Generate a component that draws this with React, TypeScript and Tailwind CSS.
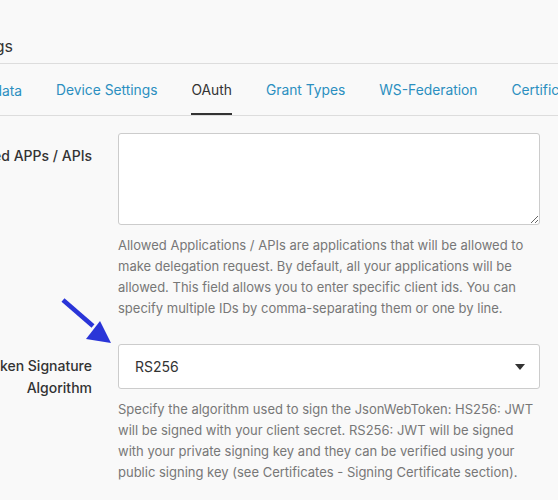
import React from "react";

const tabs = ["Device Settings", "OAuth", "Grant Types", "WS-Federation", "Certificates"];

function HelpText({ children, className = "" }: { children: React.ReactNode; className?: string }) {
  return (
    <p className={`text-[13px] leading-[21px] text-[#777] ${className}`}>{children}</p>
  );
}

function Arrow() {
  return (
    <svg
      className="absolute left-[55px] top-[291px]"
      width="64"
      height="58"
      viewBox="0 0 64 58"
      fill="none"
    >
      {/* annotation arrow */}
      <line x1="8" y1="9" x2="38" y2="35" stroke="#2a35d8" strokeWidth="4.5" strokeLinecap="butt" />
      <polygon points="45,30 31,48 56,52" fill="#2a35d8" />
    </svg>
  );
}

export default function App() {
  return (
    <div
      className="relative w-[558px] h-[500px] overflow-hidden bg-[#f9f9f9] text-[#333]"
      style={{ fontFamily: "Inter, 'Liberation Sans', sans-serif" }}
    >
      {/* Page title */}
      <div className="border-b border-[#ddd] pt-[36px] pb-[7px]">
        <div className="flex w-[13px] justify-end whitespace-nowrap text-[16px] leading-[20px]">
          Settings
        </div>
      </div>

      {/* Tabs */}
      <div className="flex h-[52px] items-stretch whitespace-nowrap border-b border-[#ddd] text-[13.8px]">
        <div className="flex w-[39px] shrink-0 items-center justify-end pr-[17px] pt-[3px] text-[#2b8fc0]">
          Metadata
        </div>
        {tabs.map((tab) => {
          const active = tab === "OAuth";
          return (
            <div key={tab} className="flex shrink-0 px-[17px]">
              <div
                className={`flex items-center border-b-2 pt-[3px] ${
                  active ? "border-[#333] text-[#333]" : "border-transparent text-[#2b8fc0]"
                }`}
              >
                {tab}
              </div>
            </div>
          );
        })}
      </div>

      {/* Form */}
      <div className="ml-[-48px] mt-[17px] flex flex-col gap-[25px]">
        <div className="flex gap-[26px]">
          <label className="w-[140px] shrink-0 pt-[12px] text-right text-[14px] font-medium leading-[22px]">
            Allowed APPs / APIs
          </label>
          <div className="w-[422px] shrink-0">
            <textarea className="block h-[92px] w-full rounded-[3px] border border-[#ccc] bg-white" />
            <HelpText className="mt-[10px]">
              Allowed Applications / APIs are applications that will be allowed to make delegation
              request. By default, all your applications will be allowed. This field allows you to
              enter specific client ids. You can specify multiple IDs by comma-separating them or
              one by line.
            </HelpText>
          </div>
        </div>

        <div className="flex gap-[26px]">
          <label className="w-[140px] shrink-0 pt-[11px] text-right text-[14px] font-medium leading-[22px]">
            Token Signature Algorithm
          </label>
          <div className="w-[422px] shrink-0">
            <div className="flex h-[45px] items-center justify-between rounded-[3px] border border-[#ccc] bg-white pl-[16px] pr-[14px] text-[14px]">
              <span>RS256</span>
              <span className="h-0 w-0 border-x-[5.5px] border-t-[6px] border-x-transparent border-t-[#333]" />
            </div>
            <HelpText className="mt-[10px]">
              Specify the algorithm used to sign the JsonWebToken: HS256: JWT will be signed with
              your client secret. RS256: JWT will be signed with your private signing key and they
              can be verified using your public signing key (see Certificates - Signing
              Certificate section).
            </HelpText>
          </div>
        </div>
      </div>

      <Arrow />
    </div>
  );
}
